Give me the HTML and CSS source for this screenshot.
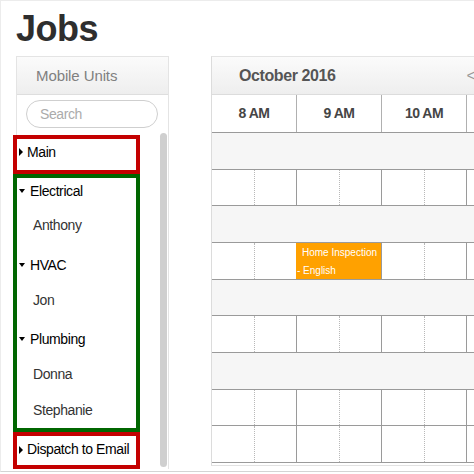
FILE: index.html
```html
<!DOCTYPE html>
<html>
<head>
<meta charset="utf-8">
<link rel="stylesheet" href="styles.css">
</head>
<body>
<div class="page">
  <h1 class="title">Jobs</h1>
  <div class="layout">
    <aside class="units">
      <div class="units-head">Mobile Units</div>
      <div class="search-wrap"><input class="search" type="text" placeholder="Search"></div>
      <div class="tree-wrap">
        <div class="tree">
          <div class="group group-red group-first">
            <div class="node node-head"><span class="tri tri-right"></span>Main</div>
          </div>
          <div class="group group-green">
            <div class="node node-head node-open node-top"><span class="tri tri-down"></span>Electrical</div>
            <div class="node node-child">Anthony</div>
            <div class="node node-head node-open"><span class="tri tri-down"></span>HVAC</div>
            <div class="node node-child">Jon</div>
            <div class="node node-head node-open"><span class="tri tri-down"></span>Plumbing</div>
            <div class="node node-child">Donna</div>
            <div class="node node-child">Stephanie</div>
          </div>
          <div class="group group-red group-last">
            <div class="node node-head"><span class="tri tri-right"></span>Dispatch to Email</div>
          </div>
        </div>
        <div class="scrollbar"></div>
      </div>
    </aside>
    <section class="sched">
      <div class="sched-head">
        <span class="month">October 2016</span>
        <span class="nav">&lt;</span>
      </div>
      <div class="times">
        <div class="time">8 AM</div>
        <div class="time">9 AM</div>
        <div class="time">10 AM</div>
        <div class="time"></div>
      </div>
      <div class="rows">
        <div class="row band"></div>
        <div class="row cells">
          <div class="hour"><div class="half"></div></div>
          <div class="hour"><div class="half"></div></div>
          <div class="hour"><div class="half"></div></div>
          <div class="hour"><div class="half"></div></div>
        </div>
        <div class="row band"></div>
        <div class="row cells">
          <div class="hour"><div class="half"></div></div>
          <div class="hour"><div class="half"></div></div>
          <div class="hour"><div class="half"></div></div>
          <div class="hour"><div class="half"></div></div>
          <div class="event">Home Inspection - English</div>
        </div>
        <div class="row band"></div>
        <div class="row cells">
          <div class="hour"><div class="half"></div></div>
          <div class="hour"><div class="half"></div></div>
          <div class="hour"><div class="half"></div></div>
          <div class="hour"><div class="half"></div></div>
        </div>
        <div class="row band"></div>
        <div class="row cells">
          <div class="hour"><div class="half"></div></div>
          <div class="hour"><div class="half"></div></div>
          <div class="hour"><div class="half"></div></div>
          <div class="hour"><div class="half"></div></div>
        </div>
        <div class="row cells">
          <div class="hour"><div class="half"></div></div>
          <div class="hour"><div class="half"></div></div>
          <div class="hour"><div class="half"></div></div>
          <div class="hour"><div class="half"></div></div>
        </div>
      </div>
    </section>
  </div>
</div>
</body>
</html>
```
FILE: styles.css
```css
html, body {
  margin: 0;
  padding: 0;
  background: #fff;
  overflow: hidden;
}
body {
  width: 474px;
  height: 474px;
  font-family: "Liberation Sans", Arial, sans-serif;
}
.page {
  box-sizing: border-box;
  width: 474px;
  height: 472px;
  border-top: 1px solid #ececec;
  border-left: 1px solid #ececec;
  border-bottom: 1px solid #d4d4d4;
  padding: 9px 0 0 15px;
  overflow: hidden;
}
.title {
  margin: 0 0 8px 0;
  font-size: 36px;
  line-height: 38px;
  font-weight: bold;
  color: #2e2e2e;
  letter-spacing: -0.5px;
}
.layout {
  display: flex;
  align-items: flex-start;
  gap: 42px;
}

/* left panel */
.units {
  box-sizing: border-box;
  width: 153px;
  flex: none;
  border: 1px solid #e4e4e4;
  border-bottom: none;
}
.units-head {
  height: 37px;
  line-height: 37px;
  padding-left: 19px;
  font-size: 15px;
  letter-spacing: -0.1px;
  color: #808080;
  background: linear-gradient(#fbfbfb, #eeeeee);
  border-bottom: 1px solid #dedede;
}
.search-wrap {
  padding: 5px 0 5px 9px;
}
.search {
  box-sizing: border-box;
  display: block;
  width: 132px;
  height: 28px;
  margin: 0;
  padding: 0 0 0 13px;
  border: 1px solid #cfcfcf;
  border-radius: 14px;
  font-family: "Liberation Sans", Arial, sans-serif;
  font-size: 14px;
  letter-spacing: -0.4px;
  color: #333;
  background: #fff;
  outline: none;
}
.search::placeholder {
  color: #ababab;
}
.tree-wrap {
  display: flex;
  align-items: flex-start;
}
.tree {
  width: 127px;
  margin-left: -4px;
  font-size: 14px;
  letter-spacing: -0.4px;
}
.group {
  border: 4px solid;
}
.group-red {
  border-color: #c40000;
}
.group-green {
  border-color: #006600;
}
.group-first {
  margin-top: 2px;
  padding-bottom: 5px;
}
.group-last {
  margin-top: 0;
  padding-bottom: 2px;
}
.group-last .node-head {
  line-height: 27px;
}
.node {
  white-space: nowrap;
}
.node-head {
  display: flex;
  align-items: center;
  padding-left: 2px;
  line-height: 26px;
  color: #000;
}
.group-green .node-head {
  line-height: 24px;
  padding-top: 9px;
  padding-bottom: 6px;
}
.group-green .node-head.node-top {
  padding-top: 1px;
  padding-bottom: 5px;
}
.node-child {
  line-height: 35.6px;
  padding-left: 16px;
  color: #333;
}
.tri {
  display: inline-block;
  width: 0;
  height: 0;
  flex: none;
}
.tri-right {
  border-left: 4px solid #000;
  border-top: 4px solid transparent;
  border-bottom: 4px solid transparent;
  margin-right: 4px;
}
.tri-down {
  border-top: 4px solid #000;
  border-left: 3.5px solid transparent;
  border-right: 3.5px solid transparent;
  margin-right: 5px;
}
.scrollbar {
  width: 7px;
  height: 334px;
  margin-left: auto;
  margin-right: 1px;
  border-radius: 4px;
  background: #cfcfcf;
}

/* scheduler */
.sched {
  flex: none;
  width: 400px;
  border-left: 1px solid #dcdcdc;
  border-top: 1px solid #e4e4e4;
  border-bottom: 1px solid #e2e2e2;
  padding-bottom: 2px;
}
.sched-head {
  display: flex;
  align-items: center;
  height: 37px;
  padding-left: 27px;
  background: linear-gradient(#fbfbfb, #eeeeee);
  border-bottom: 1px solid #dcdcdc;
}
.month {
  font-size: 16px;
  font-weight: bold;
  letter-spacing: -0.4px;
  color: #555;
}
.nav {
  margin-left: 131px;
  font-size: 16px;
  color: #9a9a9a;
}
.times {
  display: flex;
  height: 37px;
  border-bottom: 1px solid #9a9a9a;
  background: #fff;
}
.time {
  box-sizing: border-box;
  width: 85px;
  flex: none;
  border-right: 1px solid #b0b0b0;
  text-align: center;
  line-height: 37px;
  font-size: 14px;
  font-weight: bold;
  letter-spacing: -0.5px;
  color: #454545;
}
.row {
  box-sizing: border-box;
  height: 36.67px;
  border-bottom: 1px solid #9a9a9a;
}
.band {
  background: #f6f6f6;
}
.cells {
  position: relative;
  display: flex;
  background: #fff;
}
.hour {
  box-sizing: border-box;
  width: 85px;
  flex: none;
  border-right: 1px solid #9a9a9a;
}
.half {
  box-sizing: border-box;
  width: 43px;
  height: 100%;
  border-right: 1px dotted #b8b8b8;
}
.event {
  position: absolute;
  left: 84px;
  top: 0;
  bottom: 0;
  width: 85px;
  box-sizing: border-box;
  padding: 1px 0 0 1px;
  background: #ffa100;
  color: #fff;
  font-size: 10px;
  line-height: 18px;
  text-indent: 5px;
  overflow: hidden;
}
```
